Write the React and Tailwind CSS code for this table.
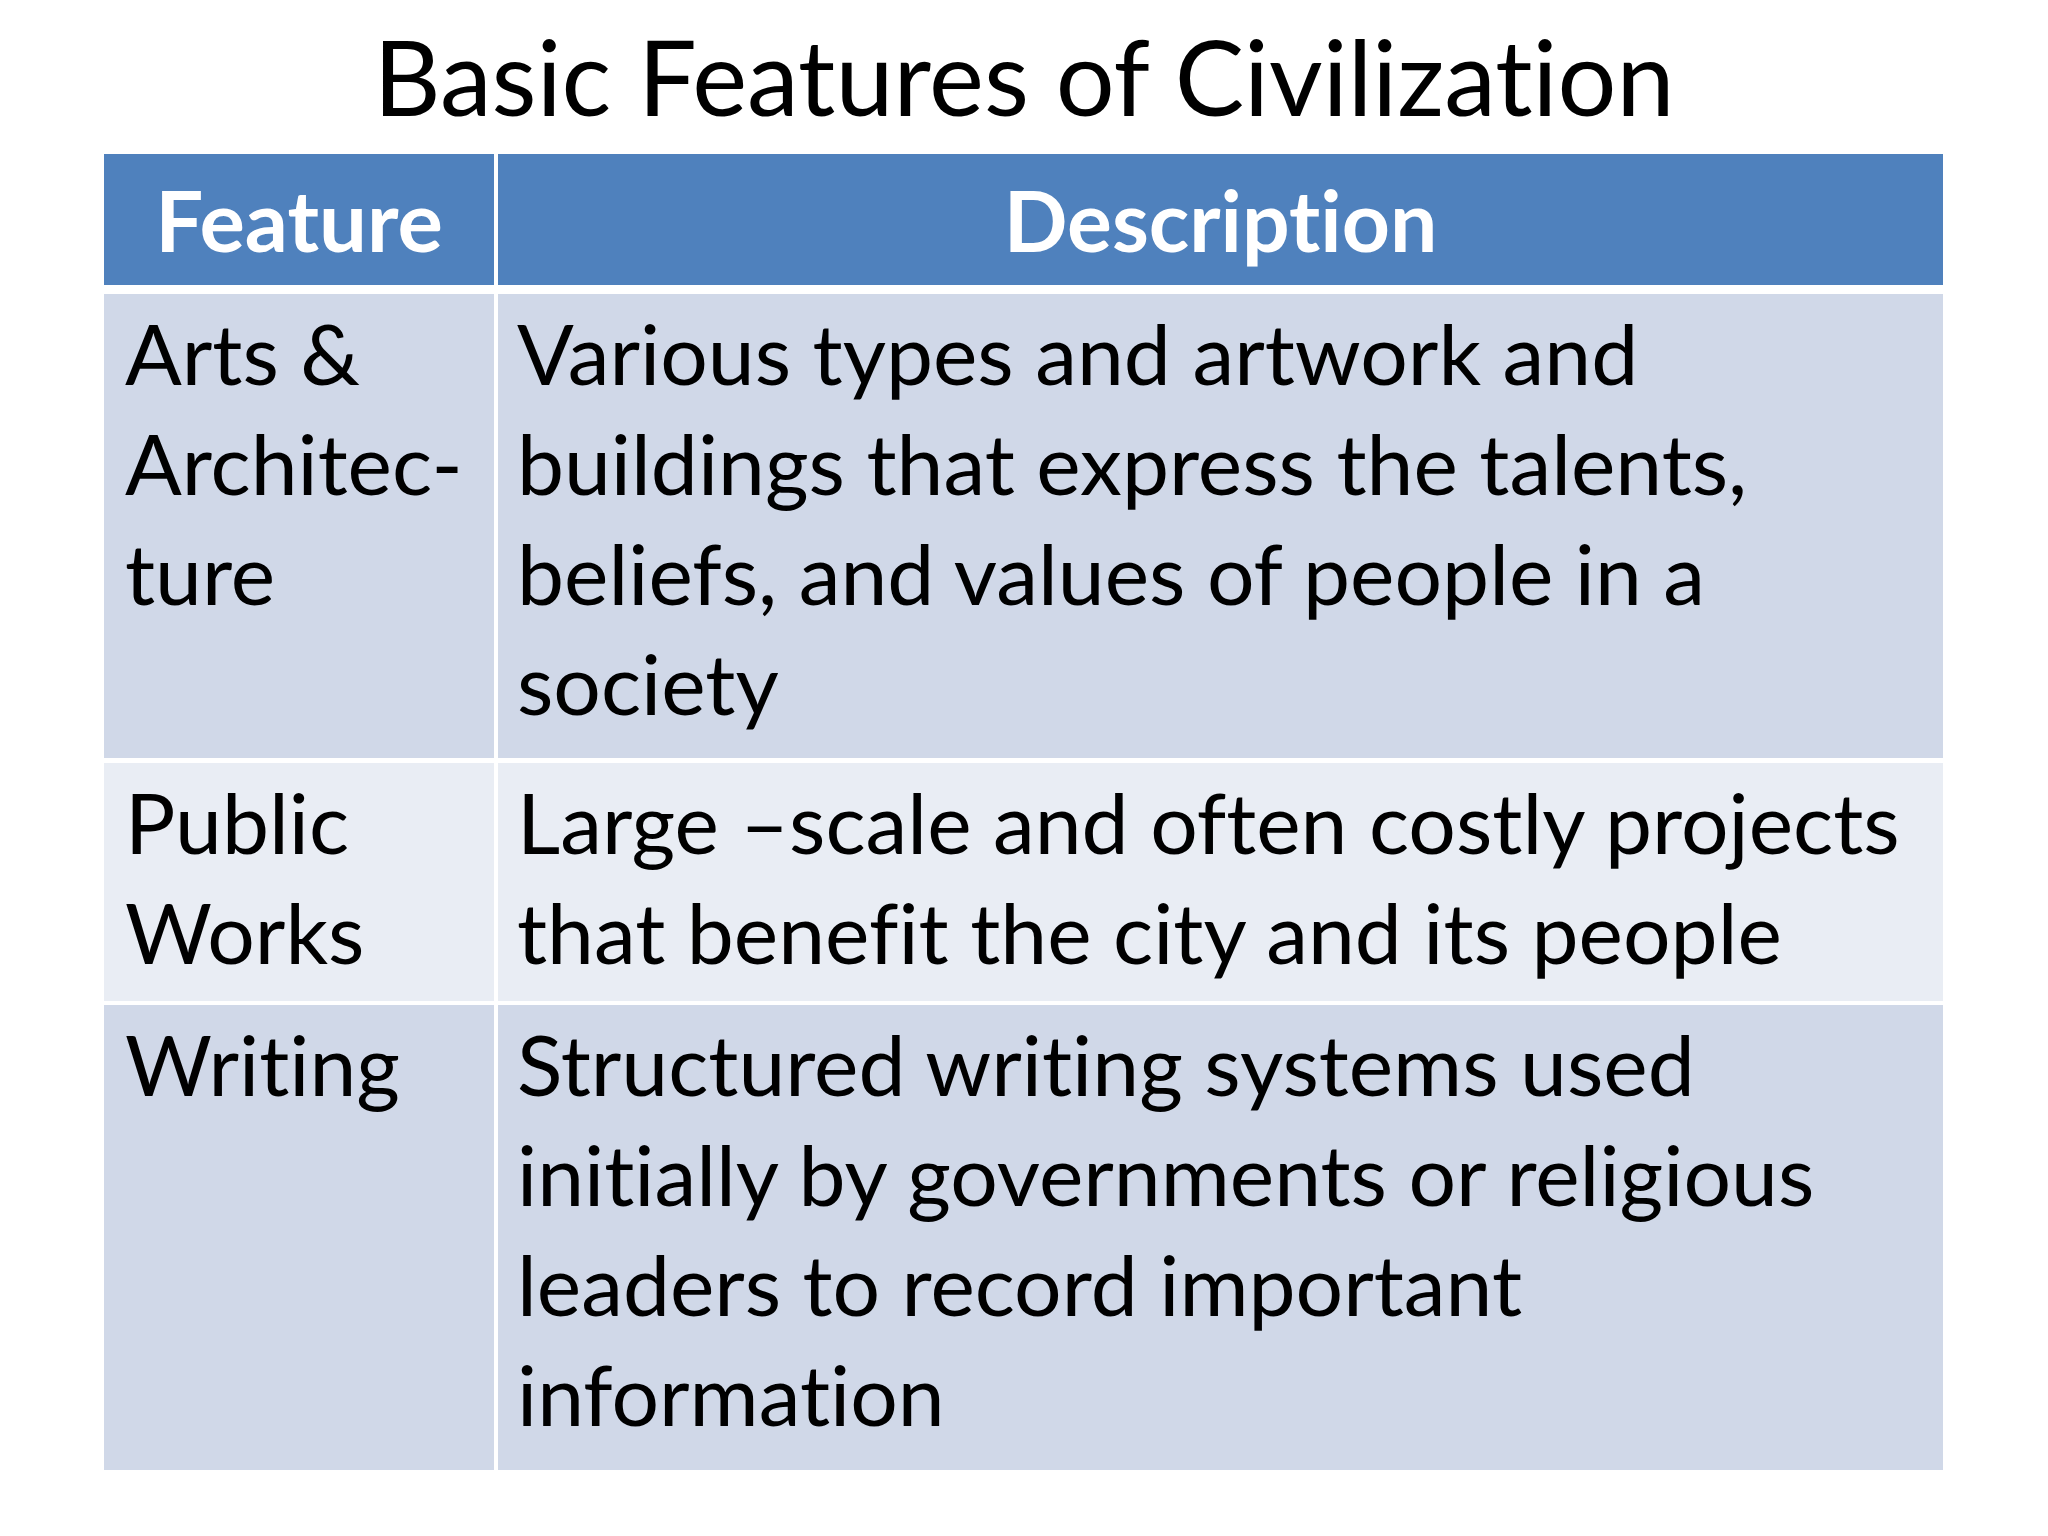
import React from "react";

const rows = [
  {
    feature: ["Arts &", "Architec-", "ture"],
    desc: [
      "Various types and artwork and",
      "buildings that express the talents,",
      "beliefs, and values of people in a",
      "society",
    ],
    bg: "bg-[#d0d8e8]",
    gap: "mb-[5px]",
    pad: "pb-[20px]",
  },
  {
    feature: ["Public", "Works"],
    desc: [
      "Large \u2013scale and often costly projects",
      "that benefit the city and its people",
    ],
    bg: "bg-[#e9edf4]",
    gap: "mb-[4px]",
    pad: "pb-[14px]",
  },
  {
    feature: ["Writing"],
    desc: [
      "Structured writing systems used",
      "initially by governments or religious",
      "leaders to record important",
      "information",
    ],
    bg: "bg-[#d0d8e8]",
    gap: "",
    pad: "pb-[21px]",
  },
];

const Lines = ({ lines }) =>
  lines.map((line, i) => (
    <div key={i} className="whitespace-nowrap">
      {line}
    </div>
  ));

export default function App() {
  return (
    <div className="w-[2048px] h-[1536px] bg-white text-black font-['Lato',sans-serif] [font-variant-ligatures:none] overflow-hidden">
      {/* Title */}
      <h1 className="pt-[15px] text-center text-[104px] leading-[121px] font-normal">
        Basic Features of Civilization
      </h1>

      {/* Table */}
      <div className="mt-[18px] ml-[104px] w-[1839px] flex flex-col">
        <div className="flex gap-x-[4px] mb-[9px]">
          <div className="w-[390px] h-[131px] bg-[#4f81bd] text-white font-bold text-[85px] leading-[131px] text-center">
            Feature
          </div>
          <div className="flex-1 h-[131px] bg-[#4f81bd] text-white font-bold text-[84px] leading-[131px] text-center">
            Description
          </div>
        </div>

        {rows.map((row, i) => (
          <div key={i} className={`flex gap-x-[4px] ${row.gap}`}>
            <div
              className={`w-[390px] ${row.bg} pl-[21px] pt-[4px] ${row.pad} text-[84px] leading-[110px]`}
            >
              <Lines lines={row.feature} />
            </div>
            <div
              className={`flex-1 ${row.bg} pl-[19px] pt-[4px] ${row.pad} text-[84px] leading-[110px]`}
            >
              <Lines lines={row.desc} />
            </div>
          </div>
        ))}
      </div>
    </div>
  );
}
